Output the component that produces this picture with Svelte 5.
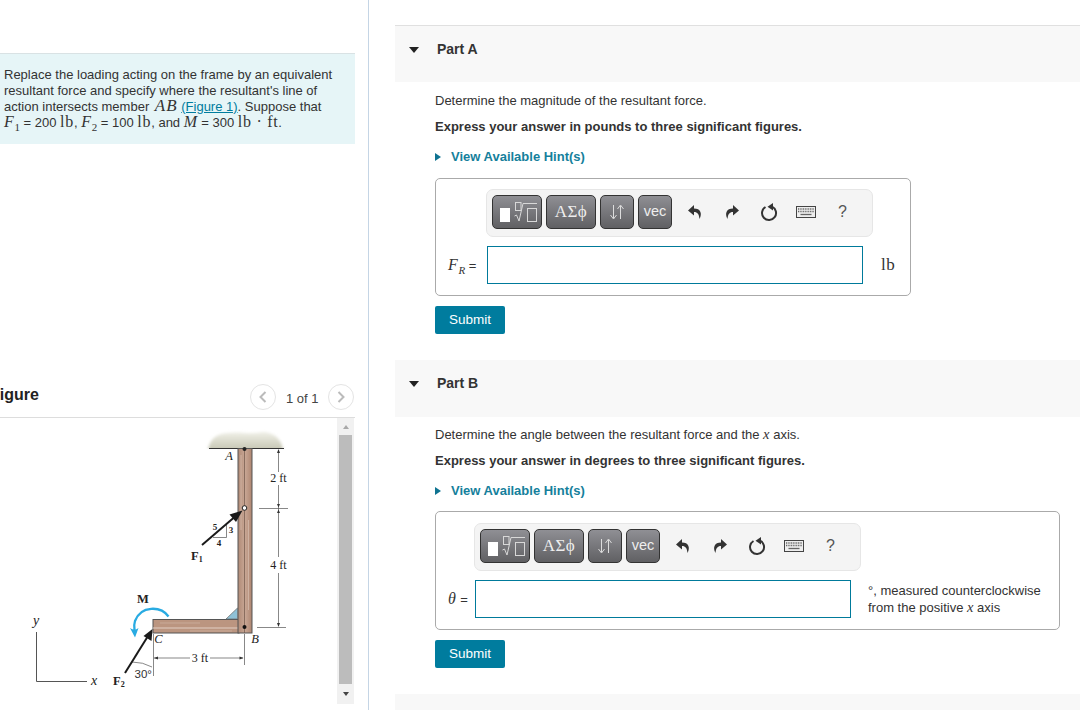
<script>
	const parts = [
		{
			name: 'Part A',
			question: 'Determine the magnitude of the resultant force.',
			express: 'Express your answer in pounds to three significant figures.',
			wide: false
		},
		{
			name: 'Part B',
			question: 'Determine the angle between the resultant force and the',
			express: 'Express your answer in degrees to three significant figures.',
			wide: true
		}
	];
</script>

<div class="page">
	<aside class="left">
		<div class="intro">
			Replace the loading acting on the frame by an equivalent resultant force and specify where the
			resultant's line of action intersects member <i class="m big ab">AB</i>
			<a href="#fig">(Figure 1)</a>. Suppose that<br />
			<i class="m big">F</i><sub class="m">1</sub> = 200 <span class="m big">lb</span>,
			<i class="m big">F</i><sub class="m">2</sub> = 100 <span class="m big">lb</span>, and
			<i class="m big">M</i> = 300 <span class="m big">lb · ft</span>.
		</div>

		<div class="fig-head">
			<h2>Figure</h2>
			<div class="pager">
				<span class="nav">
					<svg width="10" height="14" viewBox="0 0 10 14"><path d="M7.5 2 L2.5 7 L7.5 12" fill="none" stroke="#bbb" stroke-width="2" /></svg>
				</span>
				<span class="count">1 of 1</span>
				<span class="nav">
					<svg width="10" height="14" viewBox="0 0 10 14"><path d="M2.5 2 L7.5 7 L2.5 12" fill="none" stroke="#bbb" stroke-width="2" /></svg>
				</span>
			</div>
		</div>

		<div class="fig-body">
			<svg class="frame" width="337" height="292" viewBox="0 418 337 292">
				<defs>
					<linearGradient id="wood" x1="0" x2="1" y1="0" y2="0">
						<stop offset="0" stop-color="#b08a76" />
						<stop offset="0.5" stop-color="#c8a795" />
						<stop offset="1" stop-color="#ae8570" />
					</linearGradient>
					<linearGradient id="ground" x1="0" x2="0" y1="0" y2="1">
						<stop offset="0" stop-color="#f0f0e8" />
						<stop offset="0.6" stop-color="#d4d4c4" />
						<stop offset="1" stop-color="#bfc0ab" />
					</linearGradient>
					<filter id="soft" x="-10%" y="-30%" width="120%" height="160%">
						<feGaussianBlur stdDeviation="1.6" />
					</filter>
					<clipPath id="above">
						<rect x="190" y="420" width="110" height="28.500" />
					</clipPath>
				</defs>

				<g clip-path="url(#above)">
					<path d="M208 452 C209 439 216 434 228 433 C240 431 250 435 262 432 C274 432 283 440 283 452 Z" fill="url(#ground)" filter="url(#soft)" />
				</g>
				<path d="M209 448.500 H284" stroke="#333" stroke-width="1" />

				<rect x="153" y="619.500" width="86" height="13.500" fill="#bb9580" stroke="#555" />
				<path d="M153 628 H238" stroke="#e2cfc4" stroke-width="1" />
				<path d="M160 623 H200 M190 631 H232" stroke="#cdb09f" stroke-width="0.800" />
				<rect x="238" y="448.500" width="14" height="184.500" fill="url(#wood)" stroke="#555" />
				<path d="M244.500 449 V633" stroke="#6f5547" stroke-width="0.700" />
				<path d="M241 455 V530 M248.500 520 V610" stroke="#d8bfb0" stroke-width="0.700" />
				<path d="M226 619 L237.500 608 V619 Z" fill="#8fc1d6" stroke="#666" stroke-width="0.700" />

				<circle cx="244.500" cy="449" r="2" fill="#222" />
				<circle cx="244.500" cy="508" r="2.300" fill="#fff" stroke="#222" stroke-width="1" />
				<circle cx="244.500" cy="627" r="2" fill="#111" />

				<g stroke="#555" stroke-width="0.700" fill="none">
					<path d="M278.500 450 V472 M278.500 485 V557 M278.500 573 V626" />
					<path d="M259 508.500 H288 M257 627.500 H286" />
					<path d="M244.500 634 V665 M153.500 634 V676" />
					<path d="M154 658 H190 M210 658 H243" />
					<path d="M213 537.500 H226.500 V525" />
					<path d="M132 662 Q143 662 152 667" />
				</g>
				<g fill="#333">
					<path d="M278.500 449 L277 453 H280 Z M278.500 507.500 L277 504 H280 Z M278.500 509.500 L277 513 H280 Z M278.500 627 L277 623 H280 Z" />
					<path d="M154 658 L158 656.500 V659.500 Z M243.500 658 L239.500 656.500 V659.500 Z" />
				</g>

				<path d="M202 545 L234 517.500" stroke="#1a1a1a" stroke-width="2" />
				<path d="M242.500 510.500 L236 522 L229.500 514.500 Z" fill="#1a1a1a" />
				<path d="M125 673 L148 636" stroke="#1a1a1a" stroke-width="2" />
				<path d="M152.500 629 L151.500 641 L143.500 636 Z" fill="#1a1a1a" />

				<path d="M168.500 616.500 C161 606 141 605 135 621 C134 624 134 627 134.500 630" fill="none" stroke="#29abe2" stroke-width="2.300" />
				<path d="M130 628 Q134.500 631 138.500 628 L135 637.500 Z" fill="#29abe2" />

				<path d="M36.500 632 V681.500 H87" fill="none" stroke="#555" stroke-width="1" />

				<g class="lbl">
					<text x="229" y="459.500" class="it" text-anchor="middle" font-size="12.500">A</text>
					<text x="278.500" y="482" text-anchor="middle" font-size="12">2 ft</text>
					<text x="278.500" y="569" text-anchor="middle" font-size="12">4 ft</text>
					<text x="200" y="662" text-anchor="middle" font-size="12">3 ft</text>
					<text x="215" y="530" text-anchor="middle" font-size="9" font-weight="bold">5</text>
					<text x="231" y="533" text-anchor="middle" font-size="9" font-weight="bold">3</text>
					<text x="219" y="546" text-anchor="middle" font-size="9" font-weight="bold">4</text>
					<text x="191" y="559.500" font-size="12.500" font-weight="bold">F<tspan font-size="8" dy="2">1</tspan></text>
					<text x="143" y="602.500" text-anchor="middle" font-size="12.500" font-weight="bold">M</text>
					<text x="255" y="643" text-anchor="middle" class="it" font-size="12.500">B</text>
					<text x="158.500" y="643" text-anchor="middle" class="it" font-size="12.500">C</text>
					<text x="36" y="625" text-anchor="middle" class="it" font-size="14">y</text>
					<text x="94" y="685" text-anchor="middle" class="it" font-size="14">x</text>
					<text x="113" y="685" font-size="12.500" font-weight="bold">F<tspan font-size="8" dy="2">2</tspan></text>
				</g>
				<text x="134.500" y="677.500" class="sans" font-size="11.500">30°</text>
			</svg>

			<div class="scroll">
				<span class="up"></span>
				<span class="thumb"></span>
				<span class="down"></span>
			</div>
		</div>
	</aside>

	<main class="right">
		{#each parts as part}
			<section class="part">
				<header>
					<span class="caret"></span>
					<span class="part-name">{part.name}</span>
				</header>
				<div class="content" class:second={part.wide}>
					<p class="q">
						{part.question}
						{#if part.wide}<i class="m vx">x</i> axis.{/if}
					</p>
					<p class="ex">{part.express}</p>
					<p class="hint"><span class="tri"></span>View Available Hint(s)</p>

					<div class="answer" class:wide={part.wide}>
						<div class="toolbar">
							<span class="tbtn one">
								<svg width="48" height="32" viewBox="0 0 48 32">
									<rect x="7" y="12" width="10" height="14" fill="#fff" />
									<g fill="none" stroke="#d8d8d8" stroke-width="1">
										<rect x="22.500" y="6.500" width="5.500" height="8" />
										<path d="M21.500 20 L23.500 19 L26 25 L30 7.500 H44" />
										<rect x="34.500" y="12.500" width="9" height="13" />
									</g>
								</svg>
							</span>
							<span class="tbtn two">ΑΣϕ</span>
							<span class="tbtn three">
								<svg width="16" height="18" viewBox="0 0 16 18">
									<path d="M4.500 2 V15 M1.500 12 L4.500 16 L7.500 12 M11.500 16 V3 M8.500 6 L11.500 2 L14.500 6" fill="none" stroke="#ddd" stroke-width="1" />
								</svg>
							</span>
							<span class="tbtn four">vec</span>
							<span class="tools">
								<span class="slot"><svg width="16" height="16" viewBox="0 0 16 16"><path d="M7 1 L1 6.500 L7 11.500 V8 C10.500 8 12 10 12.500 15 C15.500 9.500 13.500 4.500 7 4.500 Z" fill="#333" /></svg></span>
								<span class="slot"><svg width="16" height="16" viewBox="0 0 16 16"><path d="M9 1 L15 6.500 L9 11.500 V8 C5.500 8 4 10 3.500 15 C0.500 9.500 2.500 4.500 9 4.500 Z" fill="#333" /></svg></span>
								<span class="slot"><svg width="18" height="20" viewBox="0 0 18 20"><path d="M5.500 5 A7 7 0 1 0 12 4.700" fill="none" stroke="#333" stroke-width="2" /><path d="M13 1 L13 8.500 L7.500 4.800 Z" fill="#333" /></svg></span>
								<span class="slot"><svg width="20" height="12" viewBox="0 0 20 12"><rect x="0.500" y="0.500" width="19" height="11" fill="#eee" stroke="#444" /><path d="M2 3 H18 M2 5.500 H18" stroke="#666" stroke-width="1.300" stroke-dasharray="1 0.700" /><path d="M4.500 8.500 H15.500" stroke="#666" stroke-width="1.300" /></svg></span>
								<span class="slot help">?</span>
							</span>
						</div>

						<div class="row">
							{#if part.wide}
								<span class="label"><i class="m big">θ</i> =</span>
							{:else}
								<span class="label"><i class="m big">F</i><sub class="m"><i>R</i></sub> =</span>
							{/if}
							<span class="input"></span>
							{#if part.wide}
								<span class="unit text">°, measured counterclockwise<br />from the positive <i class="m vx">x</i> axis</span>
							{:else}
								<span class="unit m lb">lb</span>
							{/if}
						</div>
					</div>

					<button class="submit">Submit</button>
				</div>
			</section>
		{/each}
		<div class="next"></div>
	</main>
</div>

<style>
	:global(body) {
		margin: 0;
		background: #fff;
		overflow: hidden;
	}

	.page {
		display: flex;
		width: 1080px;
		height: 710px;
		overflow: hidden;
		font-family: 'Liberation Sans', Arial, sans-serif;
		font-size: 13px;
		color: #333;
	}

	.left {
		flex: none;
		width: 369px;
		box-sizing: border-box;
		border-right: 1px solid #c5d5e5;
		padding-right: 13px;
		padding-top: 53px;
		overflow: hidden;
	}

	.intro {
		height: 91px;
		box-sizing: border-box;
		padding: 13px 20px 0 4px;
		background: #e6f5f7;
		border-top: 1px solid #d9e2e4;
		line-height: 16px;
	}

	.m {
		font-family: 'Liberation Serif', 'Times New Roman', serif;
		line-height: 0;
	}

	.big {
		font-size: 16px;
		letter-spacing: 0.7px;
	}

	.ab {
		margin-left: 2px;
		font-size: 17px;
		letter-spacing: 1px;
	}

	.vx {
		font-size: 14.500px;
	}

	sub.m {
		font-size: 11px;
		line-height: 0;
	}

	.intro a {
		color: #007c9e;
		text-decoration: underline;
	}

	.fig-head {
		display: flex;
		justify-content: space-between;
		align-items: center;
		height: 274px;
		box-sizing: border-box;
		padding-top: 233px;
		border-bottom: 1px solid #ddd;
	}

	h2 {
		margin: 0 0 0 -10px;
		font-size: 16px;
		line-height: 18px;
		color: #222;
		transform: translateY(-2px);
	}

	.pager {
		display: flex;
		align-items: center;
		gap: 9.500px;
		margin-right: 1px;
	}

	.nav {
		box-sizing: border-box;
		display: flex;
		align-items: center;
		justify-content: center;
		width: 26px;
		height: 26px;
		border: 1px solid #e4e4e4;
		border-radius: 50%;
	}

	.count {
		padding-top: 2px;
		color: #444;
	}

	.fig-body {
		display: flex;
		height: 292px;
	}

	.frame {
		flex: none;
		display: block;
	}

	.lbl text {
		font-family: 'Liberation Serif', serif;
		fill: #222;
	}

	.lbl .it {
		font-style: italic;
	}

	.sans {
		font-family: 'Liberation Sans', sans-serif;
		fill: #333;
	}

	.scroll {
		flex: none;
		width: 17px;
		height: 286px;
		background: #f1f1f1;
		display: flex;
		flex-direction: column;
		align-items: center;
	}

	.up,
	.down {
		flex: none;
		width: 0;
		height: 0;
		border-left: 3.500px solid transparent;
		border-right: 3.500px solid transparent;
	}

	.up {
		margin: 7px 0 6px;
		border-bottom: 4px solid #a8a8a8;
	}

	.down {
		margin: 8px 0;
		border-top: 4px solid #444;
	}

	.thumb {
		flex: 1;
		width: 13px;
		background: #bcbcbc;
	}

	.right {
		flex: 1;
		min-width: 0;
		padding: 25px 0 0 26px;
	}

	.part {
		height: 335px;
		box-sizing: border-box;
	}

	.part + .part {
		height: 334px;
	}

	.part:first-child header {
		border-top: 1px solid #e0e0e0;
	}

	header {
		display: flex;
		height: 57px;
		box-sizing: border-box;
		padding: 15px 0 0 14px;
		background: #f8f8f8;
		align-items: flex-start;
	}

	.caret {
		width: 0;
		height: 0;
		margin-top: 6px;
		border-left: 5.500px solid transparent;
		border-right: 5.500px solid transparent;
		border-top: 6px solid #222;
	}

	.part-name {
		margin-left: 18px;
		font-size: 14px;
		line-height: 16px;
		font-weight: bold;
		color: #333;
	}

	.content {
		padding-left: 40px;
	}

	p {
		margin: 0;
		line-height: 16px;
	}

	.q {
		padding-top: 11px;
	}

	.second .q {
		padding-top: 10px;
	}

	.ex {
		padding-top: 10px;
		font-weight: bold;
	}

	.hint {
		padding-top: 14px;
		font-weight: bold;
		color: #157f9c;
		display: flex;
		align-items: center;
	}

	.tri {
		width: 0;
		height: 0;
		margin-right: 10px;
		border-top: 4.500px solid transparent;
		border-bottom: 4.500px solid transparent;
		border-left: 6px solid #0f7391;
	}

	.answer {
		box-sizing: border-box;
		width: 476px;
		height: 118px;
		margin-top: 13px;
		padding: 10px 12px 0 12px;
		border: 1px solid #aaa;
		border-radius: 5px;
	}

	.answer.wide {
		width: 625px;
		height: 119px;
		margin-top: 12px;
		padding-top: 11px;
	}

	.toolbar {
		box-sizing: border-box;
		display: flex;
		align-items: flex-start;
		gap: 4px;
		width: 387px;
		height: 48px;
		margin-left: 38px;
		padding: 5px 5px 0;
		background: #f4f4f4;
		border: 1px solid #e6e6e6;
		border-radius: 7px;
	}

	.wide .toolbar {
		margin-left: 26px;
	}

	.tbtn {
		box-sizing: border-box;
		display: flex;
		align-items: center;
		justify-content: center;
		flex: none;
		height: 34px;
		border: 1px solid #333;
		border-radius: 5px;
		background: linear-gradient(#8f8f94, #606063);
		color: #eee;
	}

	.one {
		width: 50px;
	}

	.two {
		width: 50px;
		font-family: 'Liberation Serif', serif;
		font-size: 17px;
		letter-spacing: 0.5px;
	}

	.three {
		width: 34px;
	}

	.four {
		width: 34px;
		font-size: 14.500px;
		padding-bottom: 3px;
	}

	.tools {
		display: flex;
		align-items: center;
		height: 34px;
	}

	.slot {
		display: flex;
		align-items: center;
		justify-content: center;
		width: 37px;
	}

	.help {
		font-size: 16px;
		color: #555;
	}

	.row {
		display: flex;
		align-items: center;
		margin-top: 9px;
		height: 38px;
	}

	.label {
		flex: none;
		width: 39px;
		box-sizing: border-box;
		white-space: nowrap;
	}

	.wide .label {
		width: 27px;
	}

	.input {
		flex: none;
		box-sizing: border-box;
		width: 376px;
		height: 38px;
		border: 1px solid #007a9b;
		background: #fff;
	}

	.unit {
		margin-left: 18px;
	}

	.lb {
		font-size: 17px;
		letter-spacing: 0.5px;
	}

	.unit.text {
		margin-left: 17px;
		line-height: 17px;
		margin-top: -1px;
	}

	.submit {
		display: block;
		margin-top: 10px;
		width: 70px;
		height: 28px;
		padding: 0 0 2px;
		border: none;
		border-radius: 2px;
		background: #007c9e;
		color: #fff;
		font-family: 'Liberation Sans', Arial, sans-serif;
		font-size: 13.500px;
	}

	.next {
		height: 40px;
		background: #f8f8f8;
	}
</style>
